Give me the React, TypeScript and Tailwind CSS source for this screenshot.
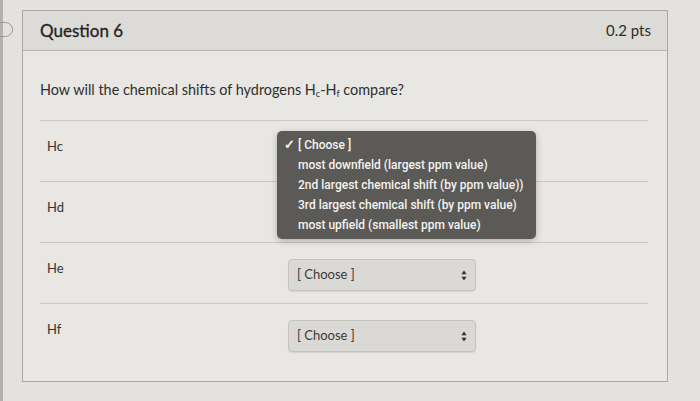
import React from "react";

const lato = { fontFamily: "Lato, 'Open Sans', sans-serif" } as const;

function Arrows() {
  return (
    <svg width="6" height="11" viewBox="0 0 6 11" className="text-[#333]">
      <path d="M3 0.5 L5.6 4.3 H0.4 Z" fill="currentColor" />
      <path d="M3 10.5 L5.6 6.7 H0.4 Z" fill="currentColor" />
    </svg>
  );
}

function Select() {
  return (
    <div className="flex h-[32px] w-[188px] items-center justify-between rounded-[4px] border border-[#c4c3bf] bg-[#dad9d5] pl-[8px] pr-[8px] shadow-[0_1px_1px_rgba(0,0,0,0.08)]">
      <span className="text-[13px] text-[#3a3a3a]">[ Choose ]</span>
      <Arrows />
    </div>
  );
}

function Row({ label, last, open }: { label: string; last?: boolean; open?: boolean }) {
  return (
    <div
      className={
        "flex items-start " +
        (last ? "h-[78px]" : "h-[61px] border-b border-[#c9c8c4]")
      }
    >
      <div className="w-[248px] pl-[7px] pt-[16px] text-[13px] text-[#333]">{label}</div>
      <div className="pt-[16px]">{open ? <div className="h-[32px] w-[188px]" /> : <Select />}</div>
    </div>
  );
}

export default function App() {
  const items = [
    "most downfield (largest ppm value)",
    "2nd largest chemical shift (by ppm value))",
    "3rd largest chemical shift (by ppm value)",
    "most upfield (smallest ppm value)",
  ];
  return (
    <div className="relative h-[401px] w-[700px] overflow-hidden bg-[#e3e2de]" style={lato}>
      <div className="absolute left-0 top-0 h-full w-[3px] bg-[#b3b2af]" />
      <div className="absolute left-[-6px] top-[22px] h-[15px] w-[19px] rounded-r-[8px] border border-[#9c9b98]" />
      <div className="ml-[22px] pt-[10px]">
        <div className="h-[372px] w-[646px] border border-[#a9a8a4] bg-[#e8e7e3]">
          <div className="flex h-[40px] items-center justify-between border-b border-[#b5b4b0] bg-[#dcdbd7] pl-[17px] pr-[16px]">
            <span className="text-[17px] font-normal text-[#222]" style={{ WebkitTextStroke: "0.3px #222" }}>
              Question 6
            </span>
            <span className="text-[15px] text-[#2d2d2d]">0.2 pts</span>
          </div>
          <div className="pl-[17px] pr-[19px]">
            <div className="h-[70px] border-b border-[#c9c8c4] pt-[28px] text-[14.4px] text-[#2f2f2f]">
              How will the chemical shifts of hydrogens H
              <sub className="text-[9px]">c</sub>-H<sub className="text-[9px]">f</sub> compare?
            </div>
            <Row label="Hc" open />
            <Row label="Hd" open />
            <Row label="He" />
            <Row label="Hf" last />
          </div>
        </div>
      </div>
      <div
        className="absolute left-[277px] top-[131px] w-[259px] rounded-[5px] bg-[#5b5a57] py-[4px] text-[12px] font-medium text-[#f3f3f1] shadow-[0_2px_6px_rgba(0,0,0,0.25)]"
        style={{ fontFamily: "Roboto, 'Liberation Sans', sans-serif" }}
      >
        <div className="relative flex h-[20px] items-center pl-[21px]">
          <span className="absolute left-[7px] text-[13px] font-bold">✓</span>
          [ Choose ]
        </div>
        {items.map((t) => (
          <div key={t} className="flex h-[20px] items-center pl-[21px]">
            {t}
          </div>
        ))}
      </div>
    </div>
  );
}
